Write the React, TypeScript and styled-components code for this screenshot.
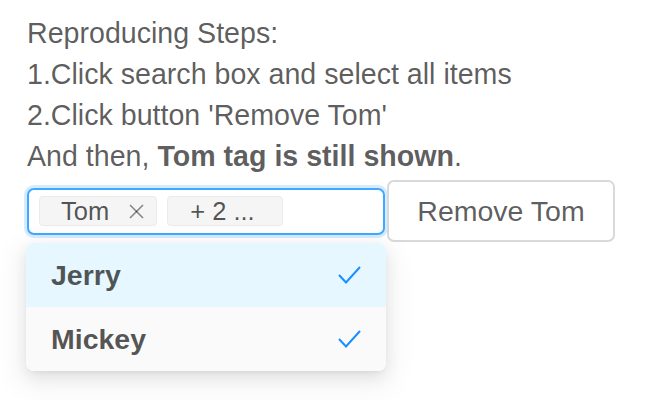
import React from 'react';
import styled, { createGlobalStyle } from 'styled-components';

const GlobalStyle = createGlobalStyle`
  html, body {
    margin: 0;
    padding: 0;
    background: #fff;
  }
  body {
    font-family: "Liberation Sans", Arial, Helvetica, sans-serif;
    color: rgba(0, 0, 0, 0.65);
  }
`;

const Page = styled.main`
  position: relative;
  box-sizing: border-box;
  min-height: 100vh;
  padding: 13px 0 0 27px;
`;

const Steps = styled.div`
  font-size: 28.6px;
  line-height: 41px;
`;

const Strong = styled.b`
  font-weight: 700;
`;

const Controls = styled.div`
  position: relative;
  display: flex;
  align-items: center;
  gap: 2px;
  margin-top: 3px;
`;

const SelectBox = styled.div`
  box-sizing: border-box;
  width: 358px;
  height: 47px;
  display: flex;
  align-items: center;
  gap: 10px;
  padding: 0 10px;
  border: 2px solid #40a9ff;
  border-radius: 7px;
  box-shadow: 0 0 0 3px rgba(24, 144, 255, 0.18);
  background: #fff;
`;

const Tag = styled.span<{ $closable?: boolean }>`
  box-sizing: border-box;
  height: 30px;
  display: inline-flex;
  align-items: center;
  gap: 20px;
  padding: ${(p) => (p.$closable ? '0 12px 0 21px' : '0 27px 0 22px')};
  background: #f5f5f5;
  border: 1px solid #ebebeb;
  border-radius: 4px;
  font-size: 25.5px;
  color: rgba(0, 0, 0, 0.68);
  white-space: nowrap;
`;

const TagClose = styled.svg`
  width: 15px;
  height: 15px;
  stroke: rgba(0, 0, 0, 0.45);
  stroke-width: 1.6;
`;

const Button = styled.button`
  box-sizing: border-box;
  width: 228px;
  height: 62px;
  padding: 0;
  border: 2px solid #d9d9d9;
  border-radius: 7px;
  background: #fff;
  font-family: inherit;
  font-size: 28.5px;
  color: rgba(0, 0, 0, 0.65);
`;

const Dropdown = styled.div`
  position: absolute;
  z-index: 10;
  top: 63px;
  left: -1px;
  width: 360px;
  border-radius: 8px;
  overflow: hidden;
  background: #fff;
  box-shadow: 0 3px 6px -4px rgba(0, 0, 0, 0.12), 0 6px 16px 0 rgba(0, 0, 0, 0.08),
    0 9px 28px 8px rgba(0, 0, 0, 0.05);
`;

const MenuItem = styled.div<{ $active?: boolean }>`
  height: 64px;
  display: flex;
  align-items: center;
  justify-content: space-between;
  padding: 0 25px;
  background: ${(p) => (p.$active ? '#e6f7ff' : '#fafafa')};
  font-size: 28.5px;
  font-weight: 700;
  color: rgba(0, 0, 0, 0.68);
`;

const Check = styled.svg`
  width: 23px;
  height: 18px;
  fill: none;
  stroke: #1890ff;
  stroke-width: 2;
`;

function CheckIcon() {
  return (
    <Check viewBox="0 0 23 18">
      <polyline points="1,9 8,16.5 22,1" />
    </Check>
  );
}

export default function App() {
  return (
    <>
      <GlobalStyle />
      <Page>
        <Steps>
          <div>Reproducing Steps:</div>
          <div>1.Click search box and select all items</div>
          <div>2.Click button 'Remove Tom'</div>
          <div>
            And then, <Strong>Tom tag is still shown</Strong>.
          </div>
        </Steps>
        <Controls>
          <SelectBox>
            <Tag $closable>
              Tom
              <TagClose viewBox="0 0 15 15">
                <line x1="1" y1="1" x2="14" y2="14" />
                <line x1="14" y1="1" x2="1" y2="14" />
              </TagClose>
            </Tag>
            <Tag>+ 2 ...</Tag>
          </SelectBox>
          <Button>Remove Tom</Button>
          <Dropdown>
            <MenuItem $active>
              Jerry
              <CheckIcon />
            </MenuItem>
            <MenuItem>
              Mickey
              <CheckIcon />
            </MenuItem>
          </Dropdown>
        </Controls>
      </Page>
    </>
  );
}
